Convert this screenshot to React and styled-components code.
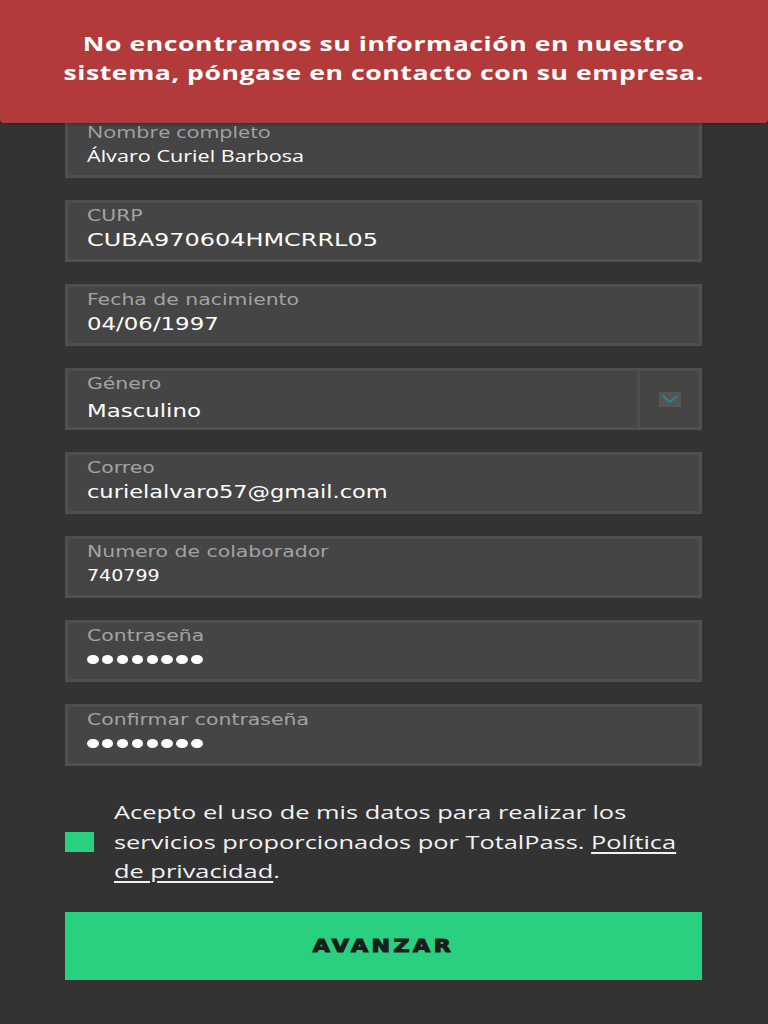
import React from "react";
import styled, { createGlobalStyle } from "styled-components";

const Global = createGlobalStyle`
  html, body { margin: 0; padding: 0; background: #333333; }
  body { font-family: "Open Sans", "DejaVu Sans", sans-serif; }
  * { box-sizing: border-box; }
`;

const Page = styled.div`
  width: 768px;
  min-height: 1024px;
  background: #333333;
  position: relative;
  overflow: hidden;
`;

const Banner = styled.div`
  position: absolute;
  top: 0;
  left: 0;
  right: 0;
  height: 123px;
  background: #b33a3b;
  border-radius: 0 0 4px 4px;
  display: flex;
  align-items: center;
  justify-content: center;
  z-index: 2;
  box-shadow: 0 1px 3px rgba(0, 0, 0, 0.3);
  padding-bottom: 6px;
`;

const BannerText = styled.div`
  text-align: center;
  color: #ffffff;
  font-family: "Open Sans", sans-serif;
  font-weight: 700;
  font-size: 19px;
  line-height: 29px;
  letter-spacing: 0.4px;
  white-space: nowrap;
  transform: scaleX(1.4);
`;

const Form = styled.div`
  padding: 116px 66px 0 65px;
  display: flex;
  flex-direction: column;
  gap: 22px;
`;

const Field = styled.div`
  height: 62px;
  background: #454545;
  border: 3px solid #4f4f4f;
  display: flex;
  align-items: stretch;
`;

const FieldBody = styled.div`
  flex: 1;
  padding: 3px 0 0 19px;
  display: flex;
  flex-direction: column;
  overflow: hidden;
`;

const Label = styled.div`
  font-family: ${p => (p.$alt ? '"Open Sans", sans-serif' : '"DejaVu Sans", sans-serif')};
  font-size: 16px;
  color: #a3a3a3;
  line-height: 20px;
  white-space: nowrap;
  transform: scaleX(${p => (p.$alt ? 1.35 : 1.275)});
  transform-origin: left center;
`;

const Value = styled.div`
  font-family: ${p => (p.$alt ? '"Open Sans", sans-serif' : '"DejaVu Sans", sans-serif')};
  font-size: ${p => p.$size || 18}px;
  color: #ffffff;
  line-height: 24px;
  margin-top: ${p => (p.$tall ? "5px" : "2px")};
  white-space: nowrap;
  transform: scaleX(${p => p.$sx || 1.27});
  transform-origin: left center;
`;

const Dots = styled.div`
  display: flex;
  gap: 3.4px;
  margin-top: 9px;
`;

const Dot = styled.span`
  width: 11.5px;
  height: 9px;
  border-radius: 50%;
  background: #ffffff;
`;

const SelectButton = styled.div`
  width: 62px;
  border-left: 3px solid #4f4f4f;
  display: flex;
  align-items: center;
  justify-content: center;
`;

const ChevronBox = styled.div`
  width: 22px;
  height: 15px;
  background: #555555;
  display: flex;
  align-items: center;
  justify-content: center;
`;

const Consent = styled.div`
  margin: 32px 66px 0 65px;
  display: flex;
  align-items: center;
  gap: 20px;
`;

const Check = styled.div`
  width: 29px;
  height: 20px;
  background: #28d07f;
  flex: none;
`;

const ConsentText = styled.p`
  margin: 0;
  width: 416px;
  font-family: "Open Sans", sans-serif;
  font-size: 18px;
  line-height: 29.5px;
  color: #f2f2f2;
  transform: scaleX(1.41);
  transform-origin: left center;
`;

const Link = styled.a`
  color: #f2f2f2;
  text-decoration: underline;
  text-underline-offset: 3px;
  text-decoration-thickness: 1.5px;
`;

const Button = styled.button`
  display: flex;
  align-items: center;
  justify-content: center;
  margin: 25px 66px 0 65px;
  width: 637px;
  height: 68px;
  background: #28d07f;
  border: none;
  padding: 0;
`;

const ButtonLabel = styled.span`
  display: inline-block;
  color: #1c1c1c;
  font-family: "DejaVu Sans", sans-serif;
  font-weight: 700;
  font-size: 17px;
  letter-spacing: 2.7px;
  -webkit-text-stroke: 1.1px #1c1c1c;
  transform: scaleX(1.3);
`;

const fields = [
  { label: "Nombre completo", value: "Álvaro Curiel Barbosa", alt: true, size: 16.5, sx: 1.31 },
  { label: "CURP", value: "CUBA970604HMCRRL05", sx: 1.33 },
  { label: "Fecha de nacimiento", value: "04/06/1997" },
  { label: "Género", value: "Masculino", select: true },
  { label: "Correo", value: "curielalvaro57@gmail.com", sx: 1.25 },
  { label: "Numero de colaborador", value: "740799", size: 15 },
  { label: "Contraseña", dots: 8 },
  { label: "Confirmar contraseña", dots: 8 },
];

export default function App() {
  return (
    <Page>
      <Global />
      <Banner>
        <BannerText>
          No encontramos su información en nuestro
          <br />
          sistema, póngase en contacto con su empresa.
        </BannerText>
      </Banner>
      <Form>
        {fields.map(f => (
          <Field key={f.label}>
            <FieldBody>
              <Label $alt={f.alt}>{f.label}</Label>
              {f.dots ? (
                <Dots>
                  {Array.from({ length: f.dots }).map((_, i) => (
                    <Dot key={i} />
                  ))}
                </Dots>
              ) : (
                <Value $alt={f.alt} $tall={f.select} $size={f.size} $sx={f.sx}>
                  {f.value}
                </Value>
              )}
            </FieldBody>
            {f.select && (
              <SelectButton>
                <ChevronBox>
                  <svg width="16" height="9" viewBox="0 0 16 9">
                    <path d="M1 1 L8 7 L15 1" fill="none" stroke="#1f8a96" strokeWidth="2" />
                  </svg>
                </ChevronBox>
              </SelectButton>
            )}
          </Field>
        ))}
      </Form>
      <Consent>
        <Check />
        <ConsentText>
          Acepto el uso de mis datos para realizar los servicios proporcionados por TotalPass.{" "}
          <Link>Política de privacidad</Link>.
        </ConsentText>
      </Consent>
      <Button>
        <ButtonLabel>AVANZAR</ButtonLabel>
      </Button>
    </Page>
  );
}
